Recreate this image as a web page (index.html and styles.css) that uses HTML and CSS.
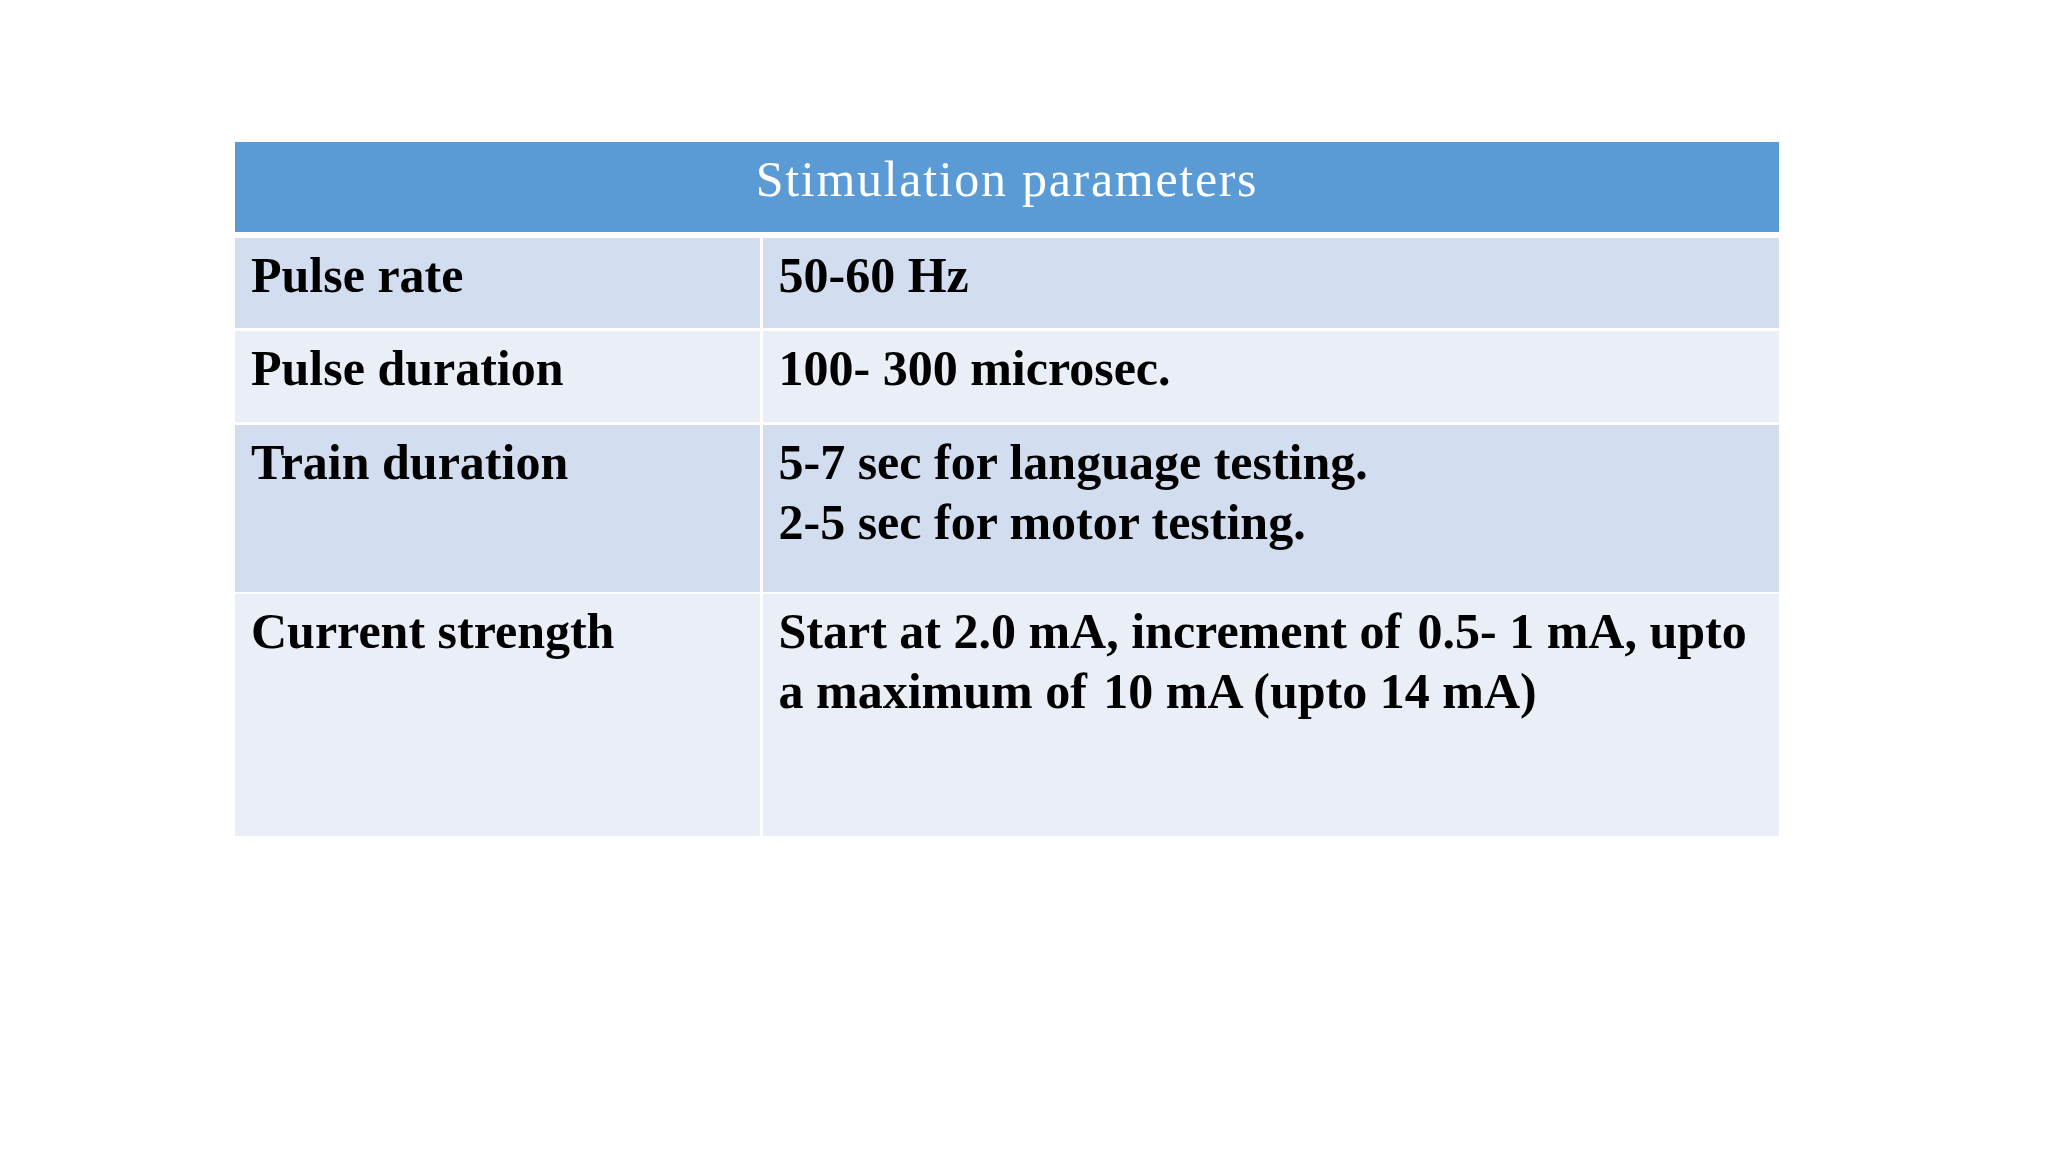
FILE: index.html
```html
<!DOCTYPE html>
<html lang="en">
<head>
<meta charset="utf-8">
<title>Stimulation parameters</title>
<link rel="stylesheet" href="styles.css">
</head>
<body>
<div class="slide">
  <div class="table">
    <div class="head">Stimulation parameters</div>
    <div class="row r1 band1">
      <div class="cell">Pulse rate</div>
      <div class="cell">50-60 Hz</div>
    </div>
    <div class="row r2 band2">
      <div class="cell">Pulse duration</div>
      <div class="cell">100- 300 microsec.</div>
    </div>
    <div class="row r3 band1">
      <div class="cell">Train duration</div>
      <div class="cell">5-7 sec for language testing.<br>2-5 sec for motor testing.</div>
    </div>
    <div class="row r4 band2">
      <div class="cell">Current strength</div>
      <div class="cell">Start at 2.0 mA, increment of <span class="wide">0.5- 1 mA, upto</span><br>a maximum of <span class="wide">10 mA (upto 14 mA)</span></div>
    </div>
  </div>
</div>
</body>
</html>
```
FILE: styles.css
```css
html, body {
  margin: 0;
  padding: 0;
  background: #ffffff;
}

.slide {
  width: 2048px;
  height: 1152px;
  padding: 142px 0 0 235px;
  box-sizing: border-box;
  font-family: "Liberation Serif", "Times New Roman", serif;
}

.table {
  width: 1544px;
  display: flex;
  flex-direction: column;
}

.head {
  height: 90px;
  box-sizing: border-box;
  background: #5b9bd5;
  color: #ffffff;
  text-align: center;
  font-size: 50px;
  line-height: 60px;
  padding-top: 7px;
  letter-spacing: 1.7px;
}

.row {
  display: grid;
  grid-template-columns: 525px 1fr;
  column-gap: 2.5px;
}

.r1 { margin-top: 6px; height: 90px; }
.r2 { margin-top: 2.5px; height: 91.5px; }
.r3 { margin-top: 3px; height: 166.5px; }
.r4 { margin-top: 2.5px; height: 242px; }

.cell {
  box-sizing: border-box;
  padding: 7px 0 0 16px;
  font-size: 50px;
  line-height: 60px;
  font-weight: bold;
  color: #000000;
  white-space: nowrap;
}

.wide {
  margin-left: 4px;
}

.band1 .cell { background: #d2deef; }
.band2 .cell { background: #eaeff7; }
```
